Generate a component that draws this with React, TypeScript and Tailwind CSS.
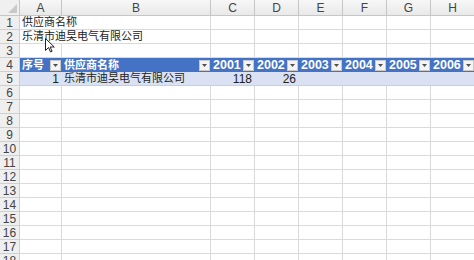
import React from 'react'

const cols = ['A', 'B', 'C', 'D', 'E', 'F', 'G', 'H']
const years = ['2001', '2002', '2003', '2004', '2005', '2006']
const rows = Array.from({ length: 18 }, (_, i) => i + 1)

const font = { fontFamily: '"Liberation Sans", "Noto Sans CJK SC", sans-serif' }

function Drop() {
    return (
        <span className="ml-auto mr-[1px] flex h-[11px] w-[11px] shrink-0 items-center justify-center border border-[#c9c9c9] bg-[#f4f4f4]">
            <svg width="5" height="3" viewBox="0 0 5 3"><path d="M0 0h5L2.5 3z" fill="#505050" /></svg>
        </span>
    )
}

function Cell({ row, col }: { row: number; col: number }) {
    if (row === 1 && col === 0) {
        return <div className="flex items-center whitespace-nowrap border-b border-[#dadada] pl-[2px] text-[11px] text-[#222]">供应商名称</div>
    }
    if (row === 2 && col === 0) {
        return <div className="flex items-center whitespace-nowrap border-b border-[#dadada] pl-[2px] text-[11px] text-[#222]">乐清市迪旲电气有限公司</div>
    }
    if ((row === 1 || row === 2) && col === 1) {
        return <div className="border-b border-r border-[#dadada]" />
    }
    if (row === 4) {
        const label = col === 0 ? '序号' : col === 1 ? '供应商名称' : years[col - 2]
        return (
            <div className="flex items-center bg-[#4472c4] pl-[2px] text-white">
                <span className={col < 2 ? 'text-[11px] font-bold' : 'text-[12.5px] font-bold'}>{label}</span>
                <Drop />
            </div>
        )
    }
    if (row === 5) {
        let content: React.ReactNode = null
        let cls = 'flex items-center bg-[#d9e1f2] border-b border-[#c4cfe6] text-[#222]'
        if (col === 0) { content = <span className="text-[12px]">1</span>; cls += ' justify-end pr-[3px]' }
        if (col === 1) { content = <span className="text-[11px] whitespace-nowrap">乐清市迪旲电气有限公司</span>; cls += ' pl-[2px]' }
        if (col === 2) { content = <span className="text-[12px]">118</span>; cls += ' justify-end pr-[3px]' }
        if (col === 3) { content = <span className="text-[12px]">26</span>; cls += ' justify-end pr-[3px]' }
        return <div className={cls}>{content}</div>
    }
    return <div className="border-b border-r border-[#dadada]" />
}

export default function App() {
    return (
        <div className="relative h-[260px] w-[474px] overflow-hidden bg-white" style={font}>
            <div className="grid grid-cols-[20px_42px_149px_44px_44px_44px_44px_44px_44px] grid-rows-[16px_repeat(18,14px)]">
                <div className="relative border-b border-r border-[#c6c6c6] bg-[#f0f0f0]">
                    <svg className="absolute bottom-[2px] right-[2px]" width="9" height="9" viewBox="0 0 9 9"><path d="M9 0v9H0z" fill="#c9c9c9" /></svg>
                </div>
                {cols.map((c) => (
                    <div key={c} className="flex items-center justify-center border-b border-r border-[#c6c6c6] bg-gradient-to-b from-[#f7f7f7] to-[#e9e9e9] text-[12px] text-[#444]">
                        {c}
                    </div>
                ))}
                {rows.map((r) => (
                    <React.Fragment key={r}>
                        <div className="flex items-center justify-center border-b border-r border-[#cfcfcf] bg-[#efefef] text-[12px] leading-none text-[#444]">
                            {r}
                        </div>
                        {cols.map((_, ci) => (
                            <Cell key={ci} row={r} col={ci} />
                        ))}
                    </React.Fragment>
                ))}
            </div>
            <svg className="absolute left-[45px] top-[38px]" width="10" height="15" viewBox="0 0 10 15">
                <path d="M0.5 0.5v12l3-3 2 4.5 1.6-0.7-2-4.3h4.2z" fill="#fff" stroke="#222" strokeWidth="1" strokeLinejoin="round" />
            </svg>
        </div>
    )
}
